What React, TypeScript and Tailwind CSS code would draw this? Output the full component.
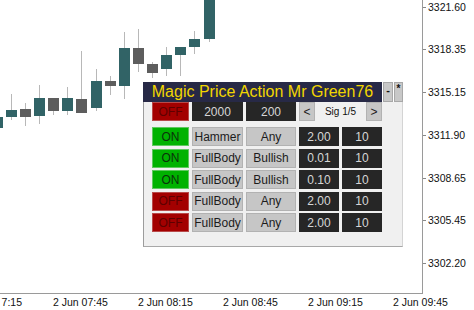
const candles: [number, number, number, number, number, boolean][] = [
  [-8, 117, 128, 112, 132, true],
  [6, 110, 117, 94, 120, true],
  [20, 109, 117, 103, 126, false],
  [34, 98, 116, 85, 124, true],
  [48, 98, 111, 98, 115, false],
  [62, 98, 111, 87, 115, true],
  [76, 99, 113, 51, 113, false],
  [91, 81, 108, 69, 111, true],
  [105, 81, 86, 76, 95, false],
  [119, 48, 86, 32, 99, true],
  [133, 48, 64, 29, 72, false],
  [147, 64, 73, 62, 78, false],
  [161, 55, 69, 47, 76, true],
  [175, 47, 55, 47, 76, true],
  [189, 39, 47, 31, 54, true],
  [204, 0, 39, 0, 42, true],
];

const prices = ["3321.60", "3318.35", "3315.15", "3311.90", "3308.65", "3305.45", "3302.20"];
const times = ["2 Jun 07:45", "2 Jun 08:15", "2 Jun 08:45", "2 Jun 09:15", "2 Jun 09:45"];

type Row = { on: boolean; pattern: string; dir: string; value: string; count: string };

const rows: Row[] = [
  { on: true, pattern: "Hammer", dir: "Any", value: "2.00", count: "10" },
  { on: true, pattern: "FullBody", dir: "Bullish", value: "0.01", count: "10" },
  { on: true, pattern: "FullBody", dir: "Bullish", value: "0.10", count: "10" },
  { on: false, pattern: "FullBody", dir: "Any", value: "2.00", count: "10" },
  { on: false, pattern: "FullBody", dir: "Any", value: "2.00", count: "10" },
];

const Toggle = ({ on }: { on: boolean }) =>
  on ? (
    <div className="w-[37px] h-full flex items-center justify-center bg-[#00b200] text-[#0b330b] border border-[#5fc85f]">
      ON
    </div>
  ) : (
    <div className="w-[37px] h-full flex items-center justify-center bg-[#a30000] text-[#5e0000] border border-[#b84a4a]">
      OFF
    </div>
  );

const Grey = ({ w, children }: { w: string; children: React.ReactNode }) => (
  <div className={`${w} h-full flex items-center justify-center bg-[#c6c6c6] text-[#1c1c1c] border border-[#b2b2b2]`}>
    {children}
  </div>
);

const Dark = ({ w, children }: { w: string; children: React.ReactNode }) => (
  <div className={`${w} h-full flex items-center justify-center bg-[#262626] text-[#d6d6d6]`}>{children}</div>
);

const Panel = () => (
  <div className="absolute left-[143px] top-[82px] w-[260px] h-[165px] flex flex-col">
    <div className="h-[20px] flex gap-px">
      <div className="flex-1 bg-[#272946] text-[#f2d600] text-[16px] leading-[20px] text-center">
        Magic Price Action Mr Green76
      </div>
      <div className="w-[10px] bg-[#c8c8c8] border border-[#a8a8a8] text-[11px] leading-[14px] text-center font-bold">-</div>
      <div className="w-[9px] bg-[#c8c8c8] border border-[#a8a8a8] text-[10px] leading-[12px] text-center font-bold">*</div>
    </div>
    <div className="flex-1 bg-[#f0f0f0] border-l border-b border-r border-l-[#9c9c9c] border-b-[#a8a8a8] border-r-[#d4d4d4] pl-[8px] flex flex-col text-[12px]">
      <div className="h-[19px] flex gap-[3px]">
        <Toggle on={false} />
        <Dark w="w-[51px]">2000</Dark>
        <Dark w="w-[50px]">200</Dark>
        <Grey w="w-[16px]">&lt;</Grey>
        <div className="w-[45px] flex items-center justify-center text-[10px] text-[#111]">Sig 1/5</div>
        <Grey w="w-[16px]">&gt;</Grey>
      </div>
      <div className="mt-[6px] flex flex-col gap-[2.5px]">
        {rows.map((r, i) => (
          <div key={i} className="h-[19px] flex gap-[3px]">
            <Toggle on={r.on} />
            <Grey w="w-[51px]">{r.pattern}</Grey>
            <Grey w="w-[50px]">{r.dir}</Grey>
            <Dark w="w-[40px]">{r.value}</Dark>
            <Dark w="w-[40px]">{r.count}</Dark>
          </div>
        ))}
      </div>
    </div>
  </div>
);

export default function App() {
  return (
    <div className="w-[474px] h-[310px] bg-white overflow-hidden flex flex-col font-['Liberation_Sans',Arial,sans-serif] text-[#111]">
      <div className="h-[294px] flex shrink-0">
        <div className="relative w-[423px] shrink-0 border-r border-b border-[#9a9a9a] overflow-hidden">
          <svg width="422" height="293" className="absolute left-0 top-0">
            {candles.map(([x, bt, bb, wt, wb, up], i) => (
              <g key={i}>
                <line x1={x + 5.5} x2={x + 5.5} y1={wt} y2={wb} stroke="#b8b8b8" strokeWidth="1" />
                <rect x={x} y={bt} width="11" height={bb - bt} fill={up ? "#316366" : "#5d5d5d"} />
              </g>
            ))}
          </svg>
          <Panel />
        </div>
        <div className="flex-1 flex flex-col gap-[31.8px] pt-[1.5px] text-[10.5px] leading-[11px]">
          {prices.map((p) => (
            <div key={p} className="flex items-center gap-[2px]">
              <div className="w-[3px] h-px bg-[#888]" />
              {p}
            </div>
          ))}
        </div>
      </div>
      <div className="flex-1 flex overflow-hidden text-[10.5px] leading-[11px] whitespace-nowrap">
        <div className="w-[53px] shrink-0 pt-[3px] text-right pr-[31px]">7:15</div>
        {times.map((t) => (
          <div key={t} className="w-[85px] shrink-0 relative pt-[3px]">
            <div className="absolute left-0 top-[-2px] w-px h-[2px] bg-[#777]" />
            {t}
          </div>
        ))}
      </div>
    </div>
  );
}
